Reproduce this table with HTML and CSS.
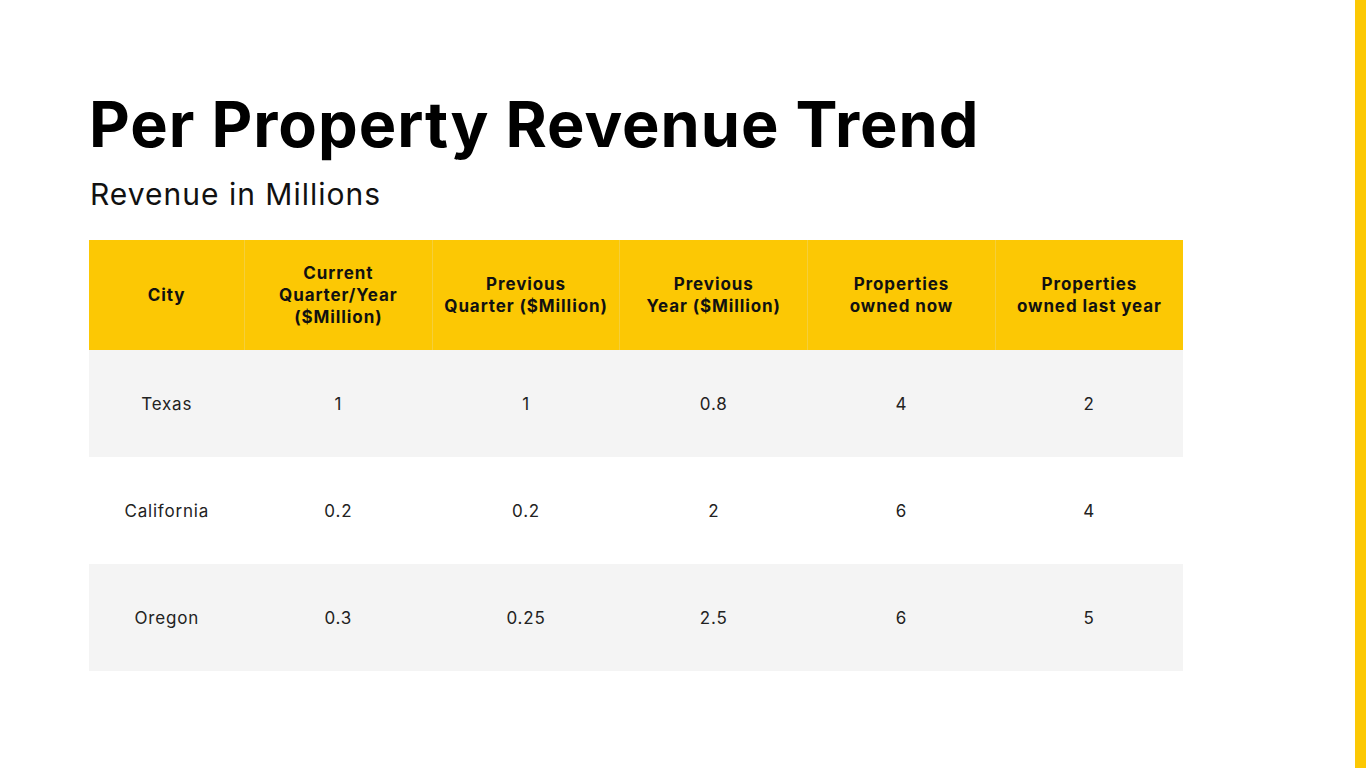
FILE: index.html
```html
<!DOCTYPE html>
<html>
<head>
<meta charset="utf-8">
<link rel="stylesheet" href="styles.css">
</head>
<body>
<div class="slide">
  <main class="content">
    <h1 class="title">Per Property Revenue Trend</h1>
    <p class="subtitle">Revenue in Millions</p>
    <table class="data">
      <thead>
        <tr>
          <th class="c-city">City</th>
          <th>Current<br>Quarter/Year<br>($Million)</th>
          <th>Previous<br>Quarter ($Million)</th>
          <th>Previous<br>Year ($Million)</th>
          <th>Properties<br>owned now</th>
          <th>Properties<br>owned last year</th>
        </tr>
      </thead>
      <tbody>
        <tr class="shade"><td>Texas</td><td>1</td><td>1</td><td>0.8</td><td>4</td><td>2</td></tr>
        <tr><td>California</td><td>0.2</td><td>0.2</td><td>2</td><td>6</td><td>4</td></tr>
        <tr class="shade"><td>Oregon</td><td>0.3</td><td>0.25</td><td>2.5</td><td>6</td><td>5</td></tr>
      </tbody>
    </table>
  </main>
  <div class="edge"></div>
</div>
</body>
</html>
```

FILE: styles.css
```css
html, body {
  margin: 0;
  padding: 0;
  background: #ffffff;
}
body {
  font-family: "Inter", "Open Sans", "Liberation Sans", sans-serif;
  color: #000;
}
.slide {
  width: 1366px;
  height: 768px;
  display: flex;
  overflow: hidden;
}
.content {
  flex: 1;
  padding: 84px 0 0 89px;
}
.edge {
  width: 11px;
  background: #fcc804;
}
.title {
  margin: 0;
  font-size: 63px;
  font-weight: 700;
  line-height: 80px;
  letter-spacing: 1px;
  color: #000;
}
.subtitle {
  margin: 12px 0 0 1px;
  font-size: 30px;
  font-weight: 400;
  line-height: 36px;
  letter-spacing: 1px;
  color: #111;
}
.data {
  margin-top: 28px;
  border-collapse: collapse;
  table-layout: fixed;
  width: 1094px;
}
.data th {
  background: #fcc804;
  height: 110px;
  padding: 0;
  font-size: 17px;
  font-weight: 700;
  line-height: 22px;
  letter-spacing: 0.9px;
  color: #111;
  text-align: center;
  vertical-align: middle;
  border-left: 1px solid #f5cf3a;
}
.data th:first-child {
  border-left: none;
}
.data th.c-city {
  width: 155px;
}
.data td {
  height: 107px;
  padding: 0;
  font-size: 17px;
  font-weight: 400;
  letter-spacing: 0.8px;
  color: #222;
  text-align: center;
  vertical-align: middle;
}
.data tr.shade td {
  background: #f4f4f4;
}
```
